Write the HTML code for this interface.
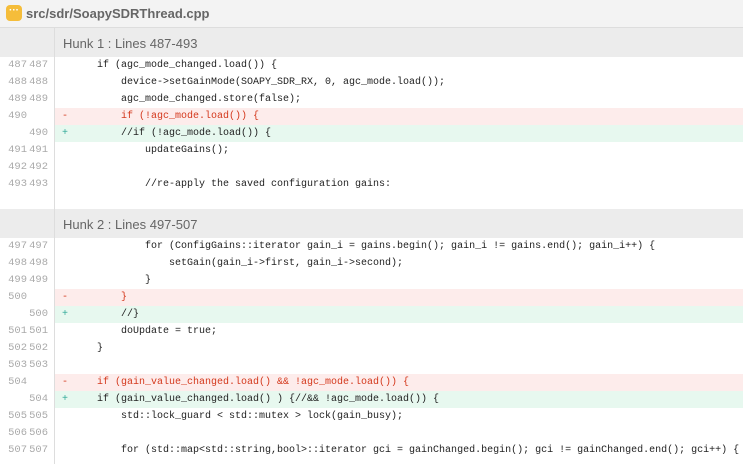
<!DOCTYPE html>
<html><head><style>
*{margin:0;padding:0;box-sizing:border-box}
body{width:743px;height:464px;overflow:hidden;background:#fff;font-family:"Liberation Sans",sans-serif;position:relative}
.top{height:28px;background:#f3f3f3;border-bottom:1px solid #ddd;position:relative}
.ic{position:absolute;left:6px;top:5px;width:16px;height:16px;background:#f5bd3a;border-radius:4px;color:#fff;font-size:10px;line-height:12px;text-align:center;font-weight:bold}
.fn{position:absolute;left:26px;top:6px;font-size:13px;font-weight:bold;color:#666}
.vl{position:absolute;left:54px;top:28px;bottom:0;width:1px;background:#ddd}
.hunk{height:29px;background:#ececec;position:relative;font-size:13px;color:#666}
.hunk span{position:absolute;left:63px;top:8px}
.r{height:17px;position:relative;font-family:"Liberation Mono",monospace;font-size:10px;line-height:17px;white-space:pre;color:#222}
.r .a,.r .b{position:absolute;top:0;color:#aaa;width:22px;text-align:right;font-size:10.5px}
.r .a{left:5px}.r .b{left:26px}
.r .m{position:absolute;left:62px;top:0}
.r .c{position:absolute;left:73px;top:0}
.del .c,.del .m{color:#d4381c}
.del::after,.add::after{content:"";position:absolute;left:55px;right:0;top:0;bottom:0;z-index:-1}
.del::after{background:#fdeceb}
.add::after{background:#e7f8ef}
.add .m{color:#3a9}
.blank{height:16px}
</style></head><body>
<div class="top"><div class="ic">···</div><div class="fn">src/sdr/SoapySDRThread.cpp</div></div>
<div class="hunk"><span>Hunk 1 : Lines 487-493</span></div>
<div class="r"><span class="a">487</span><span class="b">487</span><span class="c">    if (agc_mode_changed.load()) {</span></div>
<div class="r"><span class="a">488</span><span class="b">488</span><span class="c">        device-&gt;setGainMode(SOAPY_SDR_RX, 0, agc_mode.load());</span></div>
<div class="r"><span class="a">489</span><span class="b">489</span><span class="c">        agc_mode_changed.store(false);</span></div>
<div class="r del"><span class="a">490</span><span class="m">-</span><span class="c">        if (!agc_mode.load()) {</span></div>
<div class="r add"><span class="b">490</span><span class="m">+</span><span class="c">        //if (!agc_mode.load()) {</span></div>
<div class="r"><span class="a">491</span><span class="b">491</span><span class="c">            updateGains();</span></div>
<div class="r"><span class="a">492</span><span class="b">492</span><span class="c"></span></div>
<div class="r"><span class="a">493</span><span class="b">493</span><span class="c">            //re-apply the saved configuration gains:</span></div>
<div class="blank"></div>
<div class="hunk"><span>Hunk 2 : Lines 497-507</span></div>
<div class="r"><span class="a">497</span><span class="b">497</span><span class="c">            for (ConfigGains::iterator gain_i = gains.begin(); gain_i != gains.end(); gain_i++) {</span></div>
<div class="r"><span class="a">498</span><span class="b">498</span><span class="c">                setGain(gain_i-&gt;first, gain_i-&gt;second);</span></div>
<div class="r"><span class="a">499</span><span class="b">499</span><span class="c">            }</span></div>
<div class="r del"><span class="a">500</span><span class="m">-</span><span class="c">        }</span></div>
<div class="r add"><span class="b">500</span><span class="m">+</span><span class="c">        //}</span></div>
<div class="r"><span class="a">501</span><span class="b">501</span><span class="c">        doUpdate = true;</span></div>
<div class="r"><span class="a">502</span><span class="b">502</span><span class="c">    }</span></div>
<div class="r"><span class="a">503</span><span class="b">503</span><span class="c"></span></div>
<div class="r del"><span class="a">504</span><span class="m">-</span><span class="c">    if (gain_value_changed.load() &amp;&amp; !agc_mode.load()) {</span></div>
<div class="r add"><span class="b">504</span><span class="m">+</span><span class="c">    if (gain_value_changed.load() ) {//&amp;&amp; !agc_mode.load()) {</span></div>
<div class="r"><span class="a">505</span><span class="b">505</span><span class="c">        std::lock_guard &lt; std::mutex &gt; lock(gain_busy);</span></div>
<div class="r"><span class="a">506</span><span class="b">506</span><span class="c"></span></div>
<div class="r"><span class="a">507</span><span class="b">507</span><span class="c">        for (std::map&lt;std::string,bool&gt;::iterator gci = gainChanged.begin(); gci != gainChanged.end(); gci++) {</span></div>
<div class="vl"></div>
</body></html>
